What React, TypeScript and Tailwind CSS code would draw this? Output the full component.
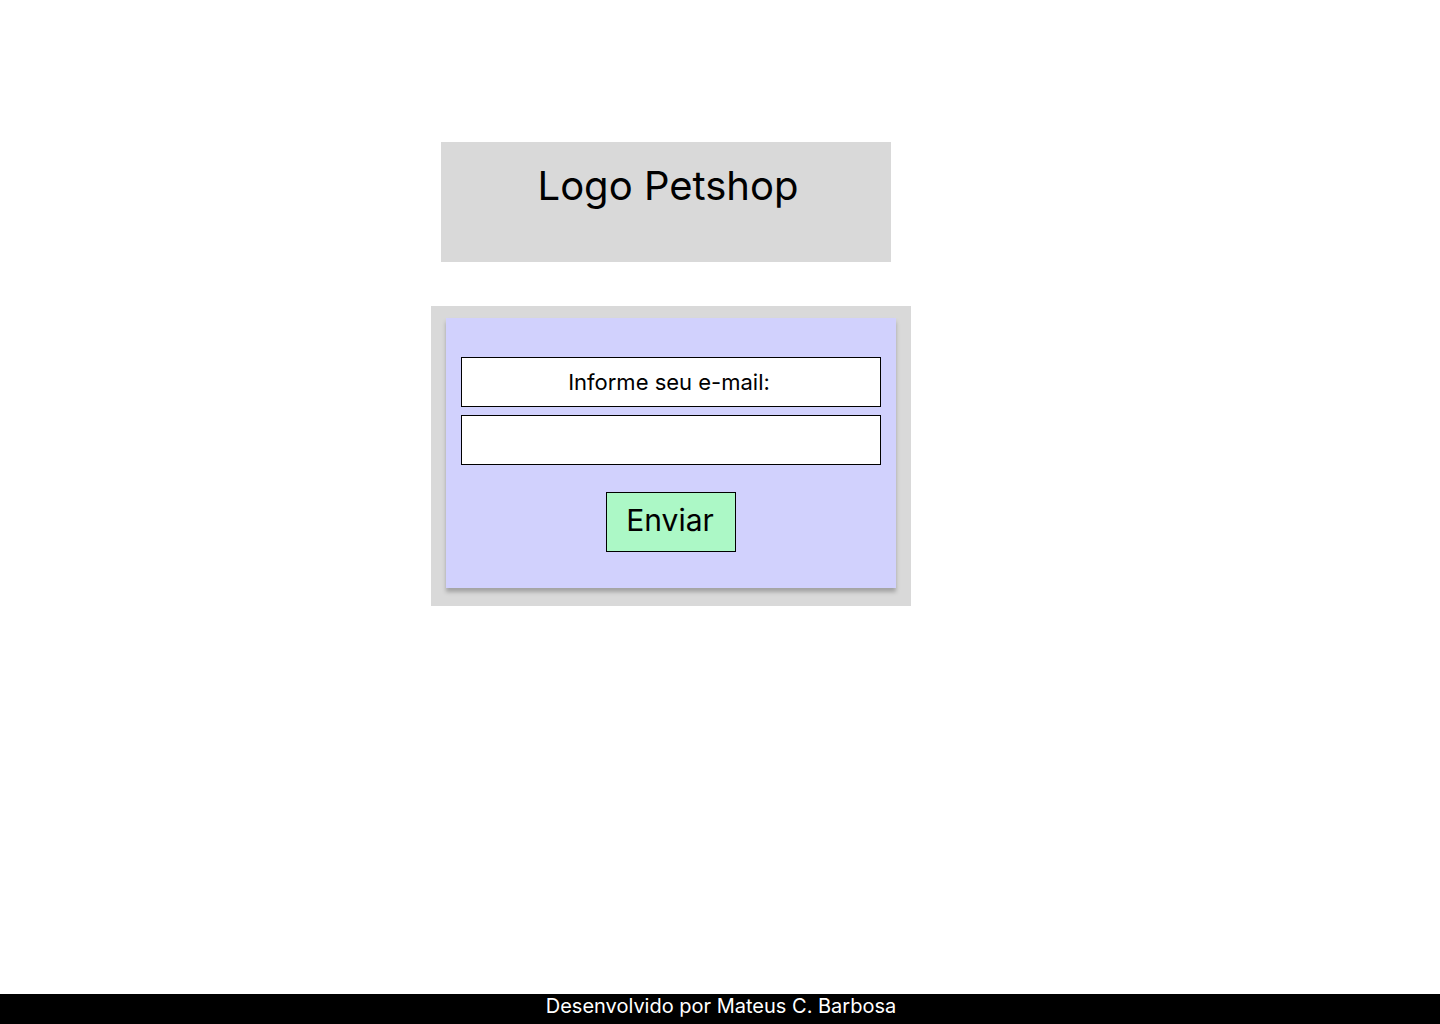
export default function App() {
  return (
    <div
      className="flex min-h-screen flex-col bg-white text-black"
      style={{ fontFamily: 'Inter, "Noto Sans", sans-serif' }}
    >
      {/* Logo */}
      <div className="ml-[441px] mt-[142px] flex h-[120px] w-[450px] justify-center bg-[#d9d9d9] pt-[20px]">
        <h1 className="pl-[4px] text-[40px] font-normal leading-[48px]">Logo Petshop</h1>
      </div>

      {/* Form */}
      <div className="ml-[431px] mt-[44px] h-[300px] w-[480px] bg-[#d9d9d9] pl-[15px] pt-[12px]">
        <form className="flex h-[270px] w-[450px] flex-col items-center bg-[#d1d1fd] pt-[39px] shadow-[0_4px_4px_rgba(0,0,0,0.25)]">
          <label
            htmlFor="email"
            className="flex h-[50px] w-[420px] items-center justify-center border border-black bg-white pr-[4px] text-[22px]"
          >
            Informe seu e-mail:
          </label>
          <input
            id="email"
            name="email"
            type="email"
            className="mt-[8px] h-[50px] w-[420px] border border-black bg-white px-3 text-[20px] outline-none"
          />
          <button
            type="submit"
            className="mt-[27px] flex h-[60px] w-[130px] items-center justify-center border border-black bg-[#acf8c6] pb-[4px] pr-[2px] text-[30px]"
          >
            Enviar
          </button>
        </form>
      </div>

      <footer className="mt-auto flex h-[30px] items-center justify-center bg-black pb-[6px] pl-[2px] text-[20px] text-white">
        Desenvolvido por Mateus C. Barbosa
      </footer>
    </div>
  );
}
